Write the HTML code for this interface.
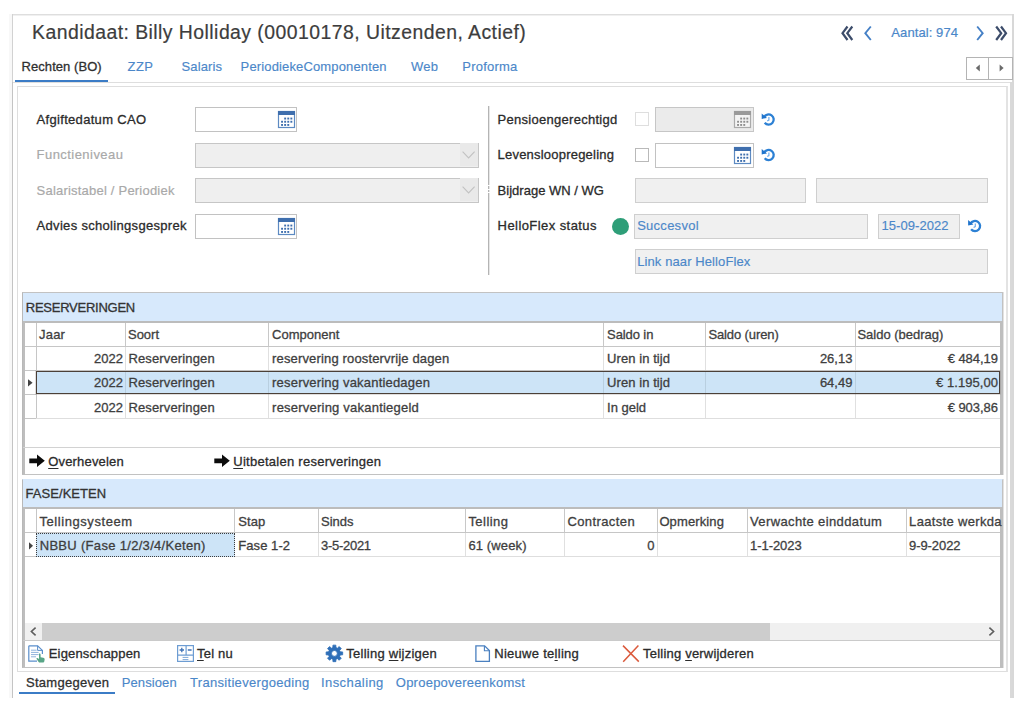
<!DOCTYPE html>
<html lang="nl">
<head>
<meta charset="utf-8">
<title>Kandidaat: Billy Holliday</title>
<style>
html,body{margin:0;padding:0;background:#fff;}
body{width:1022px;height:710px;position:relative;overflow:hidden;font-family:"Liberation Sans",sans-serif;font-size:13px;color:#3a3a3a;}
.a{position:absolute;white-space:nowrap;}
.t{position:absolute;white-space:nowrap;line-height:16px;height:16px;}
.ln{position:absolute;background:#d6d6d6;}
.blue{color:#4b87c9;-webkit-text-stroke:0.15px #4b87c9;}
.dis{color:#a9a9a9;-webkit-text-stroke:0.2px #a9a9a9;}
.inp{position:absolute;box-sizing:border-box;border:1px solid #c2c2c2;background:#fff;}
.inp.ro{background:#f0f0f0;border-color:#cfcfcf;}
.inp.d{background:#efefef;border-color:#c6c6c6;}
u{text-decoration:underline;text-underline-offset:1.5px;text-decoration-thickness:1px;}
svg{position:absolute;overflow:visible;}
</style>
</head>
<body>
<!-- outer frame -->
<div class="ln" style="left:12px;top:14px;width:1002px;height:1px;background:#dedede"></div><div class="ln" style="left:13px;top:15px;width:999px;height:1px;background:#f0f0f0"></div><div class="ln" style="left:9px;top:14px;width:3px;height:684px;background:#f8f8f8"></div>
<div class="ln" style="left:12px;top:14px;width:1px;height:684px;background:#d2d2d2"></div>
<div class="ln" style="left:1012px;top:14px;width:2px;height:684px;background:#d8d8d8"></div>

<!-- record navigation -->
<svg style="left:837.5px;top:21px" width="176" height="26" viewBox="838 20 176 26" fill="none">
 <path d="M847.5 25.5 L842.5 32.2 L847.5 39 M852.3 25.5 L847.3 32.2 L852.3 39" stroke="#3c4c6a" stroke-width="2.2"/>
 <path d="M870.8 25.5 L865.3 32.2 L870.8 39" stroke="#4580c6" stroke-width="1.9"/>
 <path d="M977.2 25.5 L982.7 32.2 L977.2 39" stroke="#4580c6" stroke-width="1.9"/>
 <path d="M996.2 25.5 L1001.2 32.2 L996.2 39 M1001 25.5 L1006 32.2 L1001 39" stroke="#3c4c6a" stroke-width="2.2"/>
</svg>

<!-- top tab strip -->
<div class="ln" style="left:15px;top:80px;width:93px;height:2px;background:#3b7cc6"></div>
<div class="a" style="left:966px;top:57px;width:47px;height:23px;box-sizing:border-box;border:1px solid #b4b4b4;background:#fff"></div>
<div class="ln" style="left:988px;top:57px;width:1px;height:23px;background:#b4b4b4"></div>
<svg style="left:966px;top:57px" width="47" height="23" viewBox="0 0 47 23"><path d="M13.8 7.6 L13.8 14.6 L9.8 11.1 Z" fill="#6a6a6a"/><path d="M33.6 7.6 L33.6 14.6 L37.6 11.1 Z" fill="#6a6a6a"/></svg>

<!-- tab page border -->
<div class="ln" style="left:12px;top:82px;width:1000px;height:1px;background:#dedede"></div>
<div class="ln" style="left:12px;top:82px;width:1px;height:616px;background:#c4c4c4"></div>
<div class="ln" style="left:1010px;top:82px;width:2px;height:616px;background:#d9d9d9"></div>
<!-- inner panel -->
<div class="a" style="left:17px;top:86px;width:991px;height:586px;box-sizing:border-box;border:1px solid #dedede;border-right:2px solid #e3e3e3"></div>

<!-- form: left column -->
<div class="inp" style="left:195px;top:107px;width:102px;height:25px"></div>
<div class="inp d" style="left:195px;top:143px;width:284px;height:25px"></div>
<div class="inp d" style="left:195px;top:178px;width:284px;height:25px"></div>
<div class="inp" style="left:195px;top:214px;width:102px;height:25px"></div>
<div class="ln" style="left:488px;top:106px;width:1px;height:169px;background:#b4b4b4"></div><div class="ln" style="left:489px;top:106px;width:1px;height:169px;background:#e6e6e6"></div>

<!-- form: right column -->
<div class="inp" style="left:635px;top:112px;width:14px;height:14px;border-color:#dedede"></div>
<div class="inp" style="left:635px;top:148px;width:14px;height:14px;border-color:#b9b9b9"></div>
<div class="inp d" style="left:655px;top:107px;width:99px;height:25px;background:#ebebeb"></div>
<div class="inp" style="left:655px;top:143px;width:99px;height:25px"></div>
<div class="inp ro" style="left:635px;top:178px;width:171px;height:25px"></div>
<div class="inp ro" style="left:816px;top:178px;width:172px;height:25px"></div>
<div class="a" style="left:612px;top:218px;width:17px;height:17px;border-radius:50%;background:#2e9e78"></div>
<div class="inp ro" style="left:634px;top:214px;width:234px;height:25px"></div>
<div class="inp ro" style="left:878px;top:214px;width:82px;height:25px"></div>
<div class="inp ro" style="left:635px;top:249px;width:353px;height:25px"></div>

<!-- RESERVERINGEN panel -->
<div class="a" style="left:22px;top:292px;width:981px;height:183px;box-sizing:border-box;border:1px solid #c2c2c2;border-left-color:#b8b8b8"></div>
<div class="a" style="left:23px;top:293px;width:979px;height:28px;background:#d7e9fc"></div>
<!-- grid frame -->
<div class="ln" style="left:23px;top:321px;width:979px;height:2px;background:#bcbcbc"></div>
<div class="ln" style="left:23px;top:321px;width:2px;height:154px;background:#bebebe"></div>
<div class="ln" style="left:1000px;top:321px;width:3px;height:154px;background:#bebebe"></div><div class="ln" style="left:1003px;top:292px;width:1px;height:183px;background:#e2e2e2"></div>
<!-- header column separators -->
<div class="ln" style="left:36px;top:323px;width:1px;height:95px;background:#c6c6c6"></div>
<div class="ln" style="left:125px;top:323px;width:1px;height:23px;background:#c8c8c8"></div>
<div class="ln" style="left:268px;top:323px;width:1px;height:23px;background:#c8c8c8"></div>
<div class="ln" style="left:603px;top:323px;width:1px;height:23px;background:#c8c8c8"></div>
<div class="ln" style="left:705px;top:323px;width:1px;height:23px;background:#c8c8c8"></div>
<div class="ln" style="left:854.5px;top:323px;width:1px;height:23px;background:#c8c8c8"></div>
<!-- data column separators -->
<div class="ln" style="left:125px;top:346px;width:1px;height:72px;background:#e0e0e0"></div>
<div class="ln" style="left:268px;top:346px;width:1px;height:72px;background:#e0e0e0"></div>
<div class="ln" style="left:603px;top:346px;width:1px;height:72px;background:#e0e0e0"></div>
<div class="ln" style="left:705px;top:346px;width:1px;height:72px;background:#e0e0e0"></div>
<div class="ln" style="left:854.5px;top:346px;width:1px;height:72px;background:#e0e0e0"></div>
<!-- row lines -->
<div class="ln" style="left:25px;top:346px;width:975px;height:1px;background:#c6c6c6"></div>
<div class="ln" style="left:25px;top:370px;width:11px;height:1px;background:#c6c6c6"></div>
<div class="ln" style="left:25px;top:394px;width:11px;height:1px;background:#c6c6c6"></div>
<div class="ln" style="left:25px;top:418px;width:11px;height:1px;background:#c6c6c6"></div>
<div class="ln" style="left:36px;top:370px;width:964px;height:1px;background:#dedede"></div>
<div class="ln" style="left:36px;top:418px;width:964px;height:1px;background:#dedede"></div>
<!-- selected row -->
<div class="a" style="left:36px;top:371px;width:964px;height:23px;box-sizing:border-box;border:1px solid #4b4038;box-shadow:0 0 0 0.5px rgba(75,64,56,0.35);background:#cde4f7"></div>
<div class="ln" style="left:125px;top:372px;width:1px;height:21px;background:#b9cfe0"></div>
<div class="ln" style="left:268px;top:372px;width:1px;height:21px;background:#b9cfe0"></div>
<div class="ln" style="left:603px;top:372px;width:1px;height:21px;background:#b9cfe0"></div>
<div class="ln" style="left:705px;top:372px;width:1px;height:21px;background:#b9cfe0"></div>
<div class="ln" style="left:854.5px;top:372px;width:1px;height:21px;background:#b9cfe0"></div>
<svg style="left:27px;top:378px" width="8" height="10" viewBox="0 0 8 10"><path d="M1 1.2 L5.6 4.8 L1 8.4 Z" fill="#444"/></svg>
<!-- button row -->
<div class="ln" style="left:23px;top:447px;width:977px;height:1px;background:#d2d2d2"></div>
<svg style="left:29px;top:453.5px" width="17" height="14" viewBox="0 0 17 14"><path d="M0.3 4.4 H8 V0.6 L15.8 6.8 L8 13 V9.2 H0.3 Z" fill="#0c0c0c"/></svg>
<svg style="left:213.5px;top:453.5px" width="17" height="14" viewBox="0 0 17 14"><path d="M0.3 4.4 H8 V0.6 L15.8 6.8 L8 13 V9.2 H0.3 Z" fill="#0c0c0c"/></svg>

<!-- FASE/KETEN panel -->
<div class="a" style="left:22px;top:479px;width:981px;height:189px;box-sizing:border-box;border:1px solid #c2c2c2;border-top-color:#d7e9fc;border-left-color:#b8b8b8"></div>
<div class="a" style="left:23px;top:479px;width:979px;height:28px;background:#d7e9fc"></div>
<div class="ln" style="left:23px;top:507px;width:979px;height:2px;background:#bcbcbc"></div>
<div class="ln" style="left:23px;top:507px;width:2px;height:160px;background:#bebebe"></div>
<div class="ln" style="left:1000px;top:507px;width:3px;height:161px;background:#bebebe"></div><div class="ln" style="left:1003px;top:479px;width:1px;height:189px;background:#e2e2e2"></div>
<div class="ln" style="left:35.5px;top:509px;width:1px;height:47px;background:#c6c6c6"></div>
<div class="ln" style="left:234px;top:509px;width:1px;height:23px;background:#c8c8c8"></div>
<div class="ln" style="left:317.5px;top:509px;width:1px;height:23px;background:#c8c8c8"></div>
<div class="ln" style="left:465px;top:509px;width:1px;height:23px;background:#c8c8c8"></div>
<div class="ln" style="left:564px;top:509px;width:1px;height:23px;background:#c8c8c8"></div>
<div class="ln" style="left:656.5px;top:509px;width:1px;height:23px;background:#c8c8c8"></div>
<div class="ln" style="left:747px;top:509px;width:1px;height:23px;background:#c8c8c8"></div>
<div class="ln" style="left:905.5px;top:509px;width:1px;height:23px;background:#c8c8c8"></div>
<div class="ln" style="left:234px;top:532px;width:1px;height:24px;background:#e0e0e0"></div>
<div class="ln" style="left:317.5px;top:532px;width:1px;height:24px;background:#e0e0e0"></div>
<div class="ln" style="left:465px;top:532px;width:1px;height:24px;background:#e0e0e0"></div>
<div class="ln" style="left:564px;top:532px;width:1px;height:24px;background:#e0e0e0"></div>
<div class="ln" style="left:656.5px;top:532px;width:1px;height:24px;background:#e0e0e0"></div>
<div class="ln" style="left:747px;top:532px;width:1px;height:24px;background:#e0e0e0"></div>
<div class="ln" style="left:905.5px;top:532px;width:1px;height:24px;background:#e0e0e0"></div>
<div class="ln" style="left:25px;top:532px;width:975px;height:1px;background:#c6c6c6"></div>
<div class="ln" style="left:25px;top:556px;width:11px;height:1px;background:#c6c6c6"></div>
<div class="ln" style="left:36px;top:556px;width:964px;height:1px;background:#dedede"></div>
<!-- focused cell -->
<div class="a" style="left:36px;top:532.5px;width:198.5px;height:24px;box-sizing:border-box;border:1px dotted #3c3c3c;background:#cde4f7"></div>
<svg style="left:28px;top:540.5px" width="8" height="10" viewBox="0 0 8 10"><path d="M1 1.2 L5 4.8 L1 8.4 Z" fill="#444"/></svg>
<!-- horizontal scrollbar -->
<div class="a" style="left:25px;top:623px;width:975px;height:17px;background:#f0f0f0"></div>
<div class="a" style="left:42px;top:623px;width:727.5px;height:17px;background:#cdcdcd"></div>
<svg style="left:25px;top:623px" width="975" height="17" viewBox="0 0 975 17" fill="none" stroke="#5e5e5e" stroke-width="1.6"><path d="M10.6 4.6 L6.4 8.5 L10.6 12.4"/><path d="M964.4 4.6 L968.6 8.5 L964.4 12.4"/></svg>
<div class="ln" style="left:23px;top:640px;width:977px;height:1px;background:#cacaca"></div>

<!-- bottom tabs underline -->
<div class="ln" style="left:19px;top:692px;width:96px;height:2px;background:#3b7cc6"></div>
<!-- icons -->
<svg style="left:277.6px;top:111.0px" width="17" height="17" viewBox="0 0 17 17"><rect x="0.5" y="0.5" width="16" height="16" fill="#ffffff" stroke="#5d8ac2" stroke-width="1.2"/><rect x="0" y="0" width="17" height="4" fill="#3f6fae"/><rect x="6.2" y="6.6" width="1.9" height="1.9" fill="#3f6fae"/><rect x="9.3" y="6.6" width="1.9" height="1.9" fill="#3f6fae"/><rect x="12.4" y="6.6" width="1.9" height="1.9" fill="#3f6fae"/><rect x="3.1" y="9.8" width="1.9" height="1.9" fill="#3f6fae"/><rect x="6.2" y="9.8" width="1.9" height="1.9" fill="#3f6fae"/><rect x="9.3" y="9.8" width="1.9" height="1.9" fill="#3f6fae"/><rect x="12.4" y="9.8" width="1.9" height="1.9" fill="#3f6fae"/><rect x="3.1" y="13.0" width="1.9" height="1.9" fill="#3f6fae"/><rect x="6.2" y="13.0" width="1.9" height="1.9" fill="#3f6fae"/><rect x="9.3" y="13.0" width="1.9" height="1.9" fill="#3f6fae"/></svg>
<svg style="left:277.6px;top:218.0px" width="17" height="17" viewBox="0 0 17 17"><rect x="0.5" y="0.5" width="16" height="16" fill="#ffffff" stroke="#5d8ac2" stroke-width="1.2"/><rect x="0" y="0" width="17" height="4" fill="#3f6fae"/><rect x="6.2" y="6.6" width="1.9" height="1.9" fill="#3f6fae"/><rect x="9.3" y="6.6" width="1.9" height="1.9" fill="#3f6fae"/><rect x="12.4" y="6.6" width="1.9" height="1.9" fill="#3f6fae"/><rect x="3.1" y="9.8" width="1.9" height="1.9" fill="#3f6fae"/><rect x="6.2" y="9.8" width="1.9" height="1.9" fill="#3f6fae"/><rect x="9.3" y="9.8" width="1.9" height="1.9" fill="#3f6fae"/><rect x="12.4" y="9.8" width="1.9" height="1.9" fill="#3f6fae"/><rect x="3.1" y="13.0" width="1.9" height="1.9" fill="#3f6fae"/><rect x="6.2" y="13.0" width="1.9" height="1.9" fill="#3f6fae"/><rect x="9.3" y="13.0" width="1.9" height="1.9" fill="#3f6fae"/></svg>
<svg style="left:733.8px;top:111.0px" width="17" height="17" viewBox="0 0 17 17"><rect x="0.5" y="0.5" width="16" height="16" fill="#f4f4f4" stroke="#aaaaaa" stroke-width="1.2"/><rect x="0" y="0" width="17" height="4" fill="#9a9a9a"/><rect x="6.2" y="6.6" width="1.9" height="1.9" fill="#8e8e8e"/><rect x="9.3" y="6.6" width="1.9" height="1.9" fill="#8e8e8e"/><rect x="12.4" y="6.6" width="1.9" height="1.9" fill="#8e8e8e"/><rect x="3.1" y="9.8" width="1.9" height="1.9" fill="#8e8e8e"/><rect x="6.2" y="9.8" width="1.9" height="1.9" fill="#8e8e8e"/><rect x="9.3" y="9.8" width="1.9" height="1.9" fill="#8e8e8e"/><rect x="12.4" y="9.8" width="1.9" height="1.9" fill="#8e8e8e"/><rect x="3.1" y="13.0" width="1.9" height="1.9" fill="#8e8e8e"/><rect x="6.2" y="13.0" width="1.9" height="1.9" fill="#8e8e8e"/><rect x="9.3" y="13.0" width="1.9" height="1.9" fill="#8e8e8e"/></svg>
<svg style="left:733.8px;top:147.0px" width="17" height="17" viewBox="0 0 17 17"><rect x="0.5" y="0.5" width="16" height="16" fill="#ffffff" stroke="#5d8ac2" stroke-width="1.2"/><rect x="0" y="0" width="17" height="4" fill="#3f6fae"/><rect x="6.2" y="6.6" width="1.9" height="1.9" fill="#3f6fae"/><rect x="9.3" y="6.6" width="1.9" height="1.9" fill="#3f6fae"/><rect x="12.4" y="6.6" width="1.9" height="1.9" fill="#3f6fae"/><rect x="3.1" y="9.8" width="1.9" height="1.9" fill="#3f6fae"/><rect x="6.2" y="9.8" width="1.9" height="1.9" fill="#3f6fae"/><rect x="9.3" y="9.8" width="1.9" height="1.9" fill="#3f6fae"/><rect x="12.4" y="9.8" width="1.9" height="1.9" fill="#3f6fae"/><rect x="3.1" y="13.0" width="1.9" height="1.9" fill="#3f6fae"/><rect x="6.2" y="13.0" width="1.9" height="1.9" fill="#3f6fae"/><rect x="9.3" y="13.0" width="1.9" height="1.9" fill="#3f6fae"/></svg>
<div class="a" style="left:460px;top:143px;width:18px;height:23px;background:#e9e9e9"></div>
<svg style="left:462.1px;top:150.8px" width="14" height="8" viewBox="0 0 14 8" fill="none" stroke="#c2c2c2" stroke-width="1.1"><path d="M0.6 0.6 L6.6 7 L12.6 0.6"/></svg>
<div class="a" style="left:460px;top:178px;width:18px;height:23px;background:#e9e9e9"></div>
<svg style="left:462.1px;top:186.0px" width="14" height="8" viewBox="0 0 14 8" fill="none" stroke="#c2c2c2" stroke-width="1.1"><path d="M0.6 0.6 L6.6 7 L12.6 0.6"/></svg>
<svg style="left:0;top:0" width="1022" height="710" viewBox="0 0 1022 710"><path d="M764.10 117.11 A5.1 5.1 0 1 1 764.69 122.78" fill="none" stroke="#2c80d4" stroke-width="2.3"/><path d="M761.7 113.5 L761.7 118.9 L767.0 118.1 Z" fill="#1f74cc"/><path d="M768.9 116.9 L768.9 120.1 L767.2 121.1" fill="none" stroke="#6facec" stroke-width="1.2"/></svg>
<svg style="left:0;top:0" width="1022" height="710" viewBox="0 0 1022 710"><path d="M764.10 152.61 A5.1 5.1 0 1 1 764.69 158.28" fill="none" stroke="#2c80d4" stroke-width="2.3"/><path d="M761.7 149.0 L761.7 154.4 L767.0 153.6 Z" fill="#1f74cc"/><path d="M768.9 152.4 L768.9 155.6 L767.2 156.6" fill="none" stroke="#6facec" stroke-width="1.2"/></svg>
<svg style="left:0;top:0" width="1022" height="710" viewBox="0 0 1022 710"><path d="M970.50 223.61 A5.1 5.1 0 1 1 971.09 229.28" fill="none" stroke="#2c80d4" stroke-width="2.3"/><path d="M968.1 220.0 L968.1 225.4 L973.4 224.6 Z" fill="#1f74cc"/><path d="M975.3 223.4 L975.3 226.6 L973.6 227.6" fill="none" stroke="#6facec" stroke-width="1.2"/></svg>
<svg style="left:28px;top:645px" width="18" height="18" viewBox="0 0 18 18" fill="none"><path d="M0.8 0.8 H9.6 L14.4 5.4 V9 M9 16.2 H0.8 V0.8" stroke="#5a8ecb" stroke-width="1.2"/><path d="M9.6 0.8 V5.4 H14.4" stroke="#5a8ecb" stroke-width="1"/><path d="M3 5.2 H8.6 M3 7.4 H10.6 M3 9.6 H10.6 M3 11.8 H8" stroke="#8fb2dc" stroke-width="1"/><path d="M11 8.6 c0.9 -0.3 1.6 0.2 1.6 1 v2.6 l2.6 0.5 c1.2 0.3 1.6 1 1.4 2 l-0.4 2 c-0.1 0.5 -0.5 0.8 -1 0.8 h-3.4 c-0.5 0 -0.9 -0.2 -1.2 -0.6 l-2 -2.8 c-0.4 -0.7 0.4 -1.5 1.2 -0.9 l1.2 0.9 z" fill="#58a587"/></svg>
<svg style="left:177px;top:645px" width="17" height="17" viewBox="0 0 17 17" fill="none"><rect x="0.6" y="0.6" width="15.8" height="15.8" stroke="#6d9dd3" stroke-width="1.2"/><path d="M0.6 10.2 H16.4 M9.1 0.6 V10.2" stroke="#6d9dd3" stroke-width="1.2"/><path d="M2.6 5 H7 M4.8 2.8 V7.2 M10.8 5 H14.6" stroke="#3f73b6" stroke-width="1.3"/><path d="M5.6 12.4 H11.4 M5.6 14.6 H11.4" stroke="#7ea8d8" stroke-width="1"/></svg>
<svg style="left:325.7px;top:645.2px" width="16.8" height="16.8" viewBox="0 0 16.8 16.8"><path d="M14.24 6.83 L16.67 6.94 L16.67 9.86 L14.24 9.97 L13.64 11.42 L15.28 13.22 L13.22 15.28 L11.42 13.64 L9.97 14.24 L9.86 16.67 L6.94 16.67 L6.83 14.24 L5.38 13.64 L3.58 15.28 L1.52 13.22 L3.16 11.42 L2.56 9.97 L0.13 9.86 L0.13 6.94 L2.56 6.83 L3.16 5.38 L1.52 3.58 L3.58 1.52 L5.38 3.16 L6.83 2.56 L6.94 0.13 L9.86 0.13 L9.97 2.56 L11.42 3.16 L13.22 1.52 L15.28 3.58 L13.64 5.38 Z M5.50 8.40 a2.90 2.90 0 1 0 5.80 0 a2.90 2.90 0 1 0 -5.80 0 Z" fill="#2f6fb8" fill-rule="evenodd" stroke="#2f6fb8" stroke-width="0.8" stroke-linejoin="round"/></svg>
<svg style="left:475px;top:645px" width="16" height="18" viewBox="0 0 16 18" fill="none"><path d="M0.9 0.9 H9.6 L14.4 5.6 V16.4 H0.9 Z" stroke="#4a80c0" stroke-width="1.3" stroke-linejoin="miter"/><path d="M9.4 0.9 V5.8 H14.4" stroke="#4a80c0" stroke-width="1.1"/></svg>
<svg style="left:622px;top:645px" width="18" height="18" viewBox="0 0 18 18" fill="none"><path d="M1 0.6 L16.8 16.6 M16.4 0.4 L1.2 16.8" stroke="#db5a3c" stroke-width="1.5"/></svg>
<div class="ln" style="left:487.5px;top:185px;width:3px;height:1px;background:#fff"></div><div class="ln" style="left:487.5px;top:188.5px;width:3px;height:1px;background:#fff"></div><div class="ln" style="left:487.5px;top:192px;width:3px;height:1px;background:#fff"></div>

<!-- texts -->
<div class="t" style="left:32.0px;top:20.3px;letter-spacing:0.46px;font-size:19.4px;line-height:24px;height:24px;color:#3d3d3d;-webkit-text-stroke:0.2px #3d3d3d;">Kandidaat: Billy Holliday (00010178, Uitzenden, Actief)</div>
<div class="t blue" style="left:891.3px;top:24.8px;letter-spacing:0.09px;-webkit-text-stroke:0.2px #4b87c9;">Aantal: 974</div>
<div class="t" style="left:21.6px;top:58.6px;letter-spacing:0.05px;color:#303030;-webkit-text-stroke:0.3px #303030;">Rechten (BO)</div>
<div class="t blue" style="left:127.6px;top:58.6px;letter-spacing:0.42px;">ZZP</div>
<div class="t blue" style="left:181.6px;top:58.6px;letter-spacing:0.11px;">Salaris</div>
<div class="t blue" style="left:240.6px;top:58.6px;letter-spacing:0.14px;">PeriodiekeComponenten</div>
<div class="t blue" style="left:411.0px;top:58.6px;letter-spacing:0.25px;">Web</div>
<div class="t blue" style="left:462.3px;top:58.6px;letter-spacing:0.22px;">Proforma</div>
<div class="t" style="left:36.6px;top:111.6px;letter-spacing:0.31px;color:#2b2b2b;-webkit-text-stroke:0.3px #2b2b2b;">Afgiftedatum CAO</div>
<div class="t dis" style="left:36.6px;top:147.1px;letter-spacing:0.45px;">Functieniveau</div>
<div class="t dis" style="left:36.6px;top:182.6px;letter-spacing:0.21px;">Salaristabel / Periodiek</div>
<div class="t" style="left:36.6px;top:218.1px;letter-spacing:0.31px;color:#2b2b2b;-webkit-text-stroke:0.3px #2b2b2b;">Advies scholingsgesprek</div>
<div class="t" style="left:497.6px;top:111.6px;letter-spacing:0.28px;color:#2b2b2b;-webkit-text-stroke:0.3px #2b2b2b;">Pensioengerechtigd</div>
<div class="t" style="left:497.6px;top:147.1px;letter-spacing:0.21px;color:#2b2b2b;-webkit-text-stroke:0.3px #2b2b2b;">Levensloopregeling</div>
<div class="t" style="left:497.6px;top:182.6px;letter-spacing:0.01px;color:#2b2b2b;-webkit-text-stroke:0.3px #2b2b2b;">Bijdrage WN / WG</div>
<div class="t" style="left:497.6px;top:218.1px;letter-spacing:0.43px;color:#2b2b2b;-webkit-text-stroke:0.3px #2b2b2b;">HelloFlex status</div>
<div class="t blue" style="left:637.2px;top:218.1px;letter-spacing:0.26px;">Succesvol</div>
<div class="t blue" style="left:881.5px;top:218.1px;letter-spacing:0.06px;">15-09-2022</div>
<div class="t blue" style="left:637.2px;top:253.6px;letter-spacing:0.10px;">Link naar HelloFlex</div>
<div class="t" style="left:25.8px;top:299.6px;letter-spacing:-0.25px;color:#333;-webkit-text-stroke:0.3px #333;">RESERVERINGEN</div>
<div class="t" style="left:39.0px;top:327.1px;letter-spacing:0.20px;color:#3e3e3e;-webkit-text-stroke:0.3px #3e3e3e;">Jaar</div>
<div class="t" style="left:128.0px;top:327.1px;letter-spacing:-0.02px;color:#3e3e3e;-webkit-text-stroke:0.3px #3e3e3e;">Soort</div>
<div class="t" style="left:272.1px;top:327.1px;color:#3e3e3e;-webkit-text-stroke:0.3px #3e3e3e;">Component</div>
<div class="t" style="left:607.1px;top:327.1px;letter-spacing:-0.10px;color:#3e3e3e;-webkit-text-stroke:0.3px #3e3e3e;">Saldo in</div>
<div class="t" style="left:708.4px;top:327.1px;letter-spacing:-0.11px;color:#3e3e3e;-webkit-text-stroke:0.3px #3e3e3e;">Saldo (uren)</div>
<div class="t" style="left:857.4px;top:327.1px;color:#3e3e3e;-webkit-text-stroke:0.3px #3e3e3e;">Saldo (bedrag)</div>
<div class="t" style="left:94.1px;top:351.4px;letter-spacing:0.03px;color:#3e3e3e;-webkit-text-stroke:0.3px #3e3e3e;">2022</div>
<div class="t" style="left:128.4px;top:351.4px;letter-spacing:0.14px;color:#3e3e3e;-webkit-text-stroke:0.3px #3e3e3e;">Reserveringen</div>
<div class="t" style="left:272.1px;top:351.4px;letter-spacing:0.15px;color:#3e3e3e;-webkit-text-stroke:0.3px #3e3e3e;">reservering roostervrije dagen</div>
<div class="t" style="left:607.1px;top:351.4px;letter-spacing:0.07px;color:#3e3e3e;-webkit-text-stroke:0.3px #3e3e3e;">Uren in tijd</div>
<div class="t" style="left:819.9px;top:351.4px;letter-spacing:-0.01px;color:#3e3e3e;-webkit-text-stroke:0.3px #3e3e3e;">26,13</div>
<div class="t" style="left:947.7px;top:351.4px;letter-spacing:-0.06px;color:#3e3e3e;-webkit-text-stroke:0.3px #3e3e3e;">€ 484,19</div>
<div class="t" style="left:94.1px;top:375.4px;letter-spacing:0.03px;color:#3e3e3e;-webkit-text-stroke:0.3px #3e3e3e;">2022</div>
<div class="t" style="left:128.4px;top:375.4px;letter-spacing:0.14px;color:#3e3e3e;-webkit-text-stroke:0.3px #3e3e3e;">Reserveringen</div>
<div class="t" style="left:272.1px;top:375.4px;letter-spacing:0.19px;color:#3e3e3e;-webkit-text-stroke:0.3px #3e3e3e;">reservering vakantiedagen</div>
<div class="t" style="left:607.1px;top:375.4px;letter-spacing:0.07px;color:#3e3e3e;-webkit-text-stroke:0.3px #3e3e3e;">Uren in tijd</div>
<div class="t" style="left:819.9px;top:375.4px;letter-spacing:-0.01px;color:#3e3e3e;-webkit-text-stroke:0.3px #3e3e3e;">64,49</div>
<div class="t" style="left:936.0px;top:375.4px;letter-spacing:0.05px;color:#3e3e3e;-webkit-text-stroke:0.3px #3e3e3e;">€ 1.195,00</div>
<div class="t" style="left:94.1px;top:399.5px;letter-spacing:0.03px;color:#3e3e3e;-webkit-text-stroke:0.3px #3e3e3e;">2022</div>
<div class="t" style="left:128.4px;top:399.5px;letter-spacing:0.14px;color:#3e3e3e;-webkit-text-stroke:0.3px #3e3e3e;">Reserveringen</div>
<div class="t" style="left:272.1px;top:399.5px;letter-spacing:0.22px;color:#3e3e3e;-webkit-text-stroke:0.3px #3e3e3e;">reservering vakantiegeld</div>
<div class="t" style="left:607.1px;top:399.5px;letter-spacing:-0.02px;color:#3e3e3e;-webkit-text-stroke:0.3px #3e3e3e;">In geld</div>
<div class="t" style="left:947.7px;top:399.5px;letter-spacing:-0.06px;color:#3e3e3e;-webkit-text-stroke:0.3px #3e3e3e;">€ 903,86</div>
<div class="t" style="left:48.2px;top:453.6px;letter-spacing:0.18px;color:#2b2b2b;-webkit-text-stroke:0.3px #2b2b2b;"><u>O</u>verhevelen</div>
<div class="t" style="left:233.3px;top:453.6px;letter-spacing:0.26px;color:#2b2b2b;-webkit-text-stroke:0.3px #2b2b2b;"><u>U</u>itbetalen reserveringen</div>
<div class="t" style="left:25.6px;top:486.0px;letter-spacing:0.04px;color:#333;-webkit-text-stroke:0.3px #333;">FASE/KETEN</div>
<div class="t" style="left:39.5px;top:513.9px;letter-spacing:0.56px;color:#3e3e3e;-webkit-text-stroke:0.3px #3e3e3e;">Tellingsysteem</div>
<div class="t" style="left:238.3px;top:513.9px;letter-spacing:0.08px;color:#3e3e3e;-webkit-text-stroke:0.3px #3e3e3e;">Stap</div>
<div class="t" style="left:321.0px;top:513.9px;letter-spacing:-0.01px;color:#3e3e3e;-webkit-text-stroke:0.3px #3e3e3e;">Sinds</div>
<div class="t" style="left:468.4px;top:513.9px;letter-spacing:0.46px;color:#3e3e3e;-webkit-text-stroke:0.3px #3e3e3e;">Telling</div>
<div class="t" style="left:567.4px;top:513.9px;letter-spacing:0.41px;color:#3e3e3e;-webkit-text-stroke:0.3px #3e3e3e;">Contracten</div>
<div class="t" style="left:659.4px;top:513.9px;letter-spacing:0.12px;color:#3e3e3e;-webkit-text-stroke:0.3px #3e3e3e;">Opmerking</div>
<div class="t" style="left:750.0px;top:513.9px;letter-spacing:0.38px;color:#3e3e3e;-webkit-text-stroke:0.3px #3e3e3e;">Verwachte einddatum</div>
<div class="t" style="left:909.1px;top:513.9px;letter-spacing:0.33px;color:#3e3e3e;-webkit-text-stroke:0.3px #3e3e3e;">Laatste werkda</div>
<div class="t" style="left:39.7px;top:537.6px;letter-spacing:0.31px;color:#3e3e3e;-webkit-text-stroke:0.3px #3e3e3e;">NBBU (Fase 1/2/3/4/Keten)</div>
<div class="t" style="left:238.3px;top:537.6px;letter-spacing:0.06px;color:#3e3e3e;-webkit-text-stroke:0.3px #3e3e3e;">Fase 1-2</div>
<div class="t" style="left:321.0px;top:537.6px;letter-spacing:-0.28px;color:#3e3e3e;-webkit-text-stroke:0.3px #3e3e3e;">3-5-2021</div>
<div class="t" style="left:468.4px;top:537.6px;letter-spacing:0.13px;color:#3e3e3e;-webkit-text-stroke:0.3px #3e3e3e;">61 (week)</div>
<div class="t" style="left:647.3px;top:537.6px;letter-spacing:-0.23px;color:#3e3e3e;-webkit-text-stroke:0.3px #3e3e3e;">0</div>
<div class="t" style="left:750.0px;top:537.6px;letter-spacing:-0.05px;color:#3e3e3e;-webkit-text-stroke:0.3px #3e3e3e;">1-1-2023</div>
<div class="t" style="left:909.1px;top:537.6px;letter-spacing:-0.09px;color:#3e3e3e;-webkit-text-stroke:0.3px #3e3e3e;">9-9-2022</div>
<div class="t" style="left:48.8px;top:645.6px;letter-spacing:0.15px;color:#2b2b2b;-webkit-text-stroke:0.3px #2b2b2b;">Ei<u>g</u>enschappen</div>
<div class="t" style="left:197.0px;top:645.6px;letter-spacing:0.22px;color:#2b2b2b;-webkit-text-stroke:0.3px #2b2b2b;"><u>T</u>el nu</div>
<div class="t" style="left:346.3px;top:645.6px;letter-spacing:0.25px;color:#2b2b2b;-webkit-text-stroke:0.3px #2b2b2b;">Telling <u>w</u>ijzigen</div>
<div class="t" style="left:494.3px;top:645.6px;letter-spacing:0.27px;color:#2b2b2b;-webkit-text-stroke:0.3px #2b2b2b;">Nieuwe te<u>l</u>ling</div>
<div class="t" style="left:643.1px;top:645.6px;letter-spacing:0.20px;color:#2b2b2b;-webkit-text-stroke:0.3px #2b2b2b;">Telling <u>v</u>erwijderen</div>
<div class="t" style="left:26.0px;top:674.8px;letter-spacing:0.28px;color:#303030;-webkit-text-stroke:0.3px #303030;">Stamgegeven</div>
<div class="t blue" style="left:121.7px;top:674.8px;letter-spacing:0.11px;">Pensioen</div>
<div class="t blue" style="left:190.0px;top:674.8px;letter-spacing:0.31px;">Transitievergoeding</div>
<div class="t blue" style="left:321.0px;top:674.8px;letter-spacing:0.42px;">Inschaling</div>
<div class="t blue" style="left:395.8px;top:674.8px;letter-spacing:0.24px;">Oproepovereenkomst</div>
</body>
</html>
